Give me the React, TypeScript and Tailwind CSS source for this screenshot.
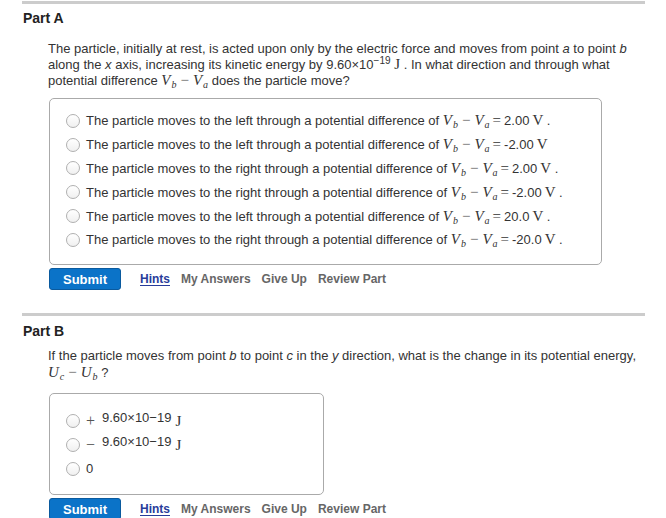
import React from 'react';

const serif = "font-['Liberation_Serif','Times_New_Roman',serif]";

// V_b − V_a in a MathJax-like look
const Var = ({ base, sub }: { base: string; sub: string }) => (
  <span className={`${serif} italic text-[15px] leading-none`}>
    {base}
    <span className="relative top-[3px] text-[10px] ml-[1px]">{sub}</span>
  </span>
);

const Diff = ({ a, b }: { a: [string, string]; b: [string, string] }) => (
  <span className="whitespace-nowrap leading-none">
    <Var base={a[0]} sub={a[1]} />
    <span className={`${serif} text-[15px] mx-[4px] text-[#666] leading-none`}>−</span>
    <Var base={b[0]} sub={b[1]} />
  </span>
);

const Radio = () => (
  <span className="inline-block w-[14px] h-[14px] rounded-full border border-[#b0b0b0] bg-gradient-to-b from-white to-[#f0f0f0] shrink-0" />
);

const optionsA = [
  { dir: 'left', val: '2.00', dot: true },
  { dir: 'left', val: '-2.00', dot: false },
  { dir: 'right', val: '2.00', dot: true },
  { dir: 'right', val: '-2.00', dot: true },
  { dir: 'left', val: '20.0', dot: true },
  { dir: 'right', val: '-20.0', dot: true },
];

const Actions = () => (
  <div className="flex items-center ml-[27px]">
    <button className="w-[72px] h-[22px] rounded-[3px] bg-[#0b73c8] border border-[#0a5a9e] text-white font-bold text-[13px] leading-none">
      Submit
    </button>
    <div className="flex items-center gap-[11px] ml-[19px] text-[12px] font-bold">
      <span className="text-[#283c9a] underline underline-offset-2">Hints</span>
      <span className="text-[#666]">My Answers</span>
      <span className="text-[#666]">Give Up</span>
      <span className="text-[#666]">Review Part</span>
    </div>
  </div>
);

export default function App() {
  return (
    <div className="w-[666px] h-[518px] overflow-hidden bg-white pl-[22px] pr-[21px] pt-[1px] font-['Liberation_Sans',Arial,sans-serif] text-[#333] text-[13px]">
      {/* Part A */}
      <section className="border-t-[3px] border-[#cccccc]">
        <h2 className="pl-[1px] pt-[5px] text-[14px] font-bold text-[#222] leading-[18px]">Part A</h2>
        <p className="pl-[26px] mt-[14px] leading-[16px]">
          The particle, initially at rest, is acted upon only by the electric force and moves from point <i>a</i> to point <i>b</i> along the <i>x</i> axis, increasing its kinetic energy by 9.60×10<span className="text-[10px] relative top-[-5px] leading-none">−19</span>
          <span className={`${serif} text-[15px] leading-none`}> J</span> . In what direction and through what potential difference{' '}
          <Diff a={['V', 'b']} b={['V', 'a']} /> does the particle move?
        </p>

        <div className="ml-[27px] mt-[9px] w-[553px] h-[167px] border border-[#aaaaaa] rounded-[5px] pt-[10px] pl-[16px]">
          {optionsA.map((o, i) => (
            <div key={i} className="flex items-center h-[23.8px] gap-[6px]">
              <Radio />
              <span className="leading-none">
                The particle moves to the {o.dir} through a potential difference of{' '}
                <Diff a={['V', 'b']} b={['V', 'a']} />
                <span className={`${serif} text-[15px] mx-[3px]`}>=</span>
                {o.val}
                <span className={`${serif} text-[15px] ml-[3px]`}>V</span>
                {o.dot && <span> .</span>}
              </span>
            </div>
          ))}
        </div>

        <div className="mt-[3px]">
          <Actions />
        </div>
      </section>

      {/* Part B */}
      <section className="border-t-[3px] border-[#cccccc] mt-[23px]">
        <h2 className="pl-[1px] pt-[6px] text-[14px] font-bold text-[#222] leading-[18px]">Part B</h2>
        <p className="pl-[26px] mt-[7px] leading-[17px]">
          If the particle moves from point <i>b</i> to point <i>c</i> in the <i>y</i> direction, what is the change in its potential energy,{' '}
          <Diff a={['U', 'c']} b={['U', 'b']} />
          <span> ?</span>
        </p>

        <div className="ml-[27px] mt-[12px] w-[275px] h-[102px] border border-[#aaaaaa] rounded-[5px] pt-[15px] pl-[16px]">
          {['+', '−'].map((s, i) => (
            <div key={i} className="flex items-center h-[24px] gap-[6px]">
              <Radio />
              <span className="flex items-center">
                <span className={`${serif} text-[16px] text-[#555] w-[14px]`}>{s}</span>
                <span className="relative top-[-3px] ml-[2px]">9.60×10−19</span>
                <span className={`${serif} text-[15px] ml-[4px]`}>J</span>
              </span>
            </div>
          ))}
          <div className="flex items-center h-[24px] gap-[6px]">
            <Radio />
            <span>0</span>
          </div>
        </div>

        <div className="mt-[3px]">
          <Actions />
        </div>
      </section>
    </div>
  );
}
